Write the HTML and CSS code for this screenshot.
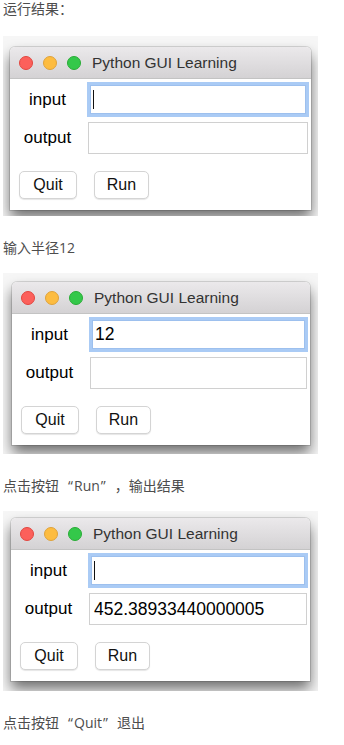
FILE: index.html
```html
<!DOCTYPE html>
<html lang="zh-CN">
<head>
<meta charset="utf-8">
<title>Python GUI Learning</title>
<link rel="stylesheet" href="styles.css">
</head>
<body>
<p class="note">运行结果：</p>
<div class="shot shot--a">
  <div class="window">
    <div class="titlebar">
      <span class="light light--red"></span>
      <span class="light light--yellow"></span>
      <span class="light light--green"></span>
      <span class="title">Python GUI Learning</span>
    </div>
    <div class="content">
      <div class="row">
        <span class="label">input</span>
        <div class="entry entry--focus"><span class="caret"></span></div>
      </div>
      <div class="row row--out">
        <span class="label">output</span>
        <div class="entry"></div>
      </div>
      <div class="buttons">
        <span class="btn btn--quit">Quit</span>
        <span class="btn btn--run">Run</span>
      </div>
    </div>
  </div>
</div>

<p class="note">输入半径12</p>
<div class="shot shot--b">
  <div class="window">
    <div class="titlebar">
      <span class="light light--red"></span>
      <span class="light light--yellow"></span>
      <span class="light light--green"></span>
      <span class="title">Python GUI Learning</span>
    </div>
    <div class="content">
      <div class="row">
        <span class="label">input</span>
        <div class="entry entry--focus">12</div>
      </div>
      <div class="row row--out">
        <span class="label">output</span>
        <div class="entry"></div>
      </div>
      <div class="buttons">
        <span class="btn btn--quit">Quit</span>
        <span class="btn btn--run">Run</span>
      </div>
    </div>
  </div>
</div>

<p class="note">点击按钮<span class="q q--open">“</span>Run<span class="q q--close">”</span>，输出结果</p>
<div class="shot shot--c">
  <div class="window">
    <div class="titlebar">
      <span class="light light--red"></span>
      <span class="light light--yellow"></span>
      <span class="light light--green"></span>
      <span class="title">Python GUI Learning</span>
    </div>
    <div class="content">
      <div class="row">
        <span class="label">input</span>
        <div class="entry entry--focus"><span class="caret"></span></div>
      </div>
      <div class="row row--out">
        <span class="label">output</span>
        <div class="entry">452.38933440000005</div>
      </div>
      <div class="buttons">
        <span class="btn btn--quit">Quit</span>
        <span class="btn btn--run">Run</span>
      </div>
    </div>
  </div>
</div>

<p class="note">点击按钮<span class="q q--open">“</span>Quit<span class="q q--close">”</span>退出</p>
</body>
</html>
```

FILE: styles.css
```css
html, body {
  background: #ffffff;
}

body {
  margin: 0;
  padding: 0 3px;
  font-family: "Open Sans", "Noto Sans CJK SC", sans-serif;
}

.note {
  margin: 0;
  font-size: 14px;
  line-height: 18px;
  color: #4d4d4d;
}

.q {
  display: inline-block;
  width: 14px;
}

.q--open {
  text-align: right;
  padding-right: 1px;
}

.q--close {
  text-align: left;
  padding-left: 1px;
}

.shot {
  width: 315px;
  box-sizing: border-box;
  margin: 16px 0 23px;
  background: #f6f6f6;
  overflow: hidden;
}

.shot--a {
  margin-top: 18px;
  padding: 11px 7px 6px 7px;
}

.shot--b {
  padding: 9px 8px 9px 9px;
}

.shot--c {
  padding: 7px 8px 10px 8px;
}

.window {
  background: #ffffff;
  border-radius: 5px 5px 0 0;
  box-shadow: 0 0 0 1px rgba(0, 0, 0, 0.12), 0 8px 14px rgba(0, 0, 0, 0.55);
  font-family: "Liberation Sans", Arial, sans-serif;
}

.titlebar {
  height: 32px;
  box-sizing: border-box;
  display: flex;
  align-items: center;
  padding: 1px 0 0 9px;
  background: linear-gradient(#ebe9eb, #d4d2d4);
  border-bottom: 1px solid #c3c3c3;
  border-radius: 5px 5px 0 0;
}

.light {
  width: 14px;
  height: 14px;
  box-sizing: border-box;
  border-radius: 50%;
  margin-right: 10px;
  flex: none;
}

.light--red {
  background: #fc605b;
  border: 1px solid #e2463f;
}

.light--yellow {
  background: #fdbc40;
  border: 1px solid #dfa23a;
}

.light--green {
  background: #34c84a;
  border: 1px solid #29ac36;
}

.title {
  margin-left: 1px;
  font-size: 15.5px;
  color: #333333;
  white-space: nowrap;
}

.content {
  padding: 3px 2px 11px 0;
}

.row {
  display: flex;
  align-items: center;
}

.row--out {
  margin-top: 5px;
}

.label {
  width: 77px;
  box-sizing: border-box;
  padding-right: 2px;
  text-align: center;
  font-size: 17px;
  color: #000000;
  flex: none;
}

.entry {
  flex: 1;
  height: 32px;
  box-sizing: border-box;
  margin: 0 1px;
  padding-left: 4px;
  border: 1px solid #d0d0d0;
  display: flex;
  align-items: center;
  font-size: 17.5px;
  color: #000000;
  white-space: nowrap;
}

.entry--focus {
  height: 35px;
  margin: 0;
  padding-left: 3px;
  border: 3px solid #aacbf5;
  box-shadow: inset 0 0 0 1px #9dc0ee;
}

.caret {
  width: 1px;
  height: 19px;
  background: #111111;
}

.buttons {
  display: flex;
  gap: 17px;
  padding-left: 9px;
  margin-top: 17px;
}

.btn {
  height: 28px;
  box-sizing: border-box;
  display: flex;
  align-items: center;
  justify-content: center;
  border: 1px solid #d4d4d4;
  border-radius: 5px;
  background: #ffffff;
  box-shadow: 0 1px 1px rgba(0, 0, 0, 0.1);
  font-size: 16px;
  color: #111111;
}

.btn--quit {
  width: 58px;
}

.btn--run {
  width: 55px;
}
```
